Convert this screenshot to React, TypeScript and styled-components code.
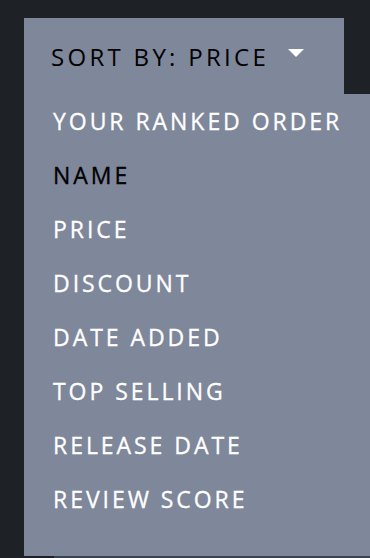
import styled, { createGlobalStyle } from "styled-components";

const GlobalStyle = createGlobalStyle`
    html, body {
        margin: 0;
        padding: 0;
        background: #1e2226;
        overflow: hidden;
    }
`

const Page = styled.div`
    width: 370px;
    height: 558px;
    padding: 18px 0 0 24px;
    box-sizing: border-box;
    font-family: "Open Sans", "Liberation Sans", sans-serif;
    overflow: hidden;
`

const SortHeader = styled.div`
    width: 320px;
    height: 76px;
    box-sizing: border-box;
    padding-left: 27px;
    display: flex;
    align-items: center;
    background: #7f879a;
    color: #000;
    font-size: 24px;
    letter-spacing: 3.3px;
`

const Arrow = styled.span`
    width: 0;
    height: 0;
    margin-left: 19px;
    margin-top: -6px;
    border-left: 8px solid transparent;
    border-right: 8px solid transparent;
    border-top: 8px solid #fff;
`

const Menu = styled.ul`
    list-style: none;
    margin: 0;
    padding: 0 0 30px 0;
    width: 360px;
    background: #7f879a;
`

const Option = styled.li<{ $hover?: boolean }>`
    height: 54px;
    line-height: 54px;
    padding-left: 29px;
    font-size: 23px;
    letter-spacing: 2.95px;
    color: ${p => (p.$hover ? "#000" : "#fff")};
    -webkit-text-stroke: 0.3px currentColor;
    white-space: nowrap;
`

const Peek = styled.div`
    margin-left: 30px;
    height: 4px;
    background: #3b4351;
`

const options = [
    "YOUR RANKED ORDER",
    "NAME",
    "PRICE",
    "DISCOUNT",
    "DATE ADDED",
    "TOP SELLING",
    "RELEASE DATE",
    "REVIEW SCORE",
]

export default function App() {
    return (
        <Page>
            <GlobalStyle />
            <SortHeader>
                SORT BY: PRICE
                <Arrow />
            </SortHeader>
            <Menu>
                {options.map(o => (
                    <Option key={o} $hover={o === "NAME"}>{o}</Option>
                ))}
            </Menu>
            <Peek />
        </Page>
    )
}
